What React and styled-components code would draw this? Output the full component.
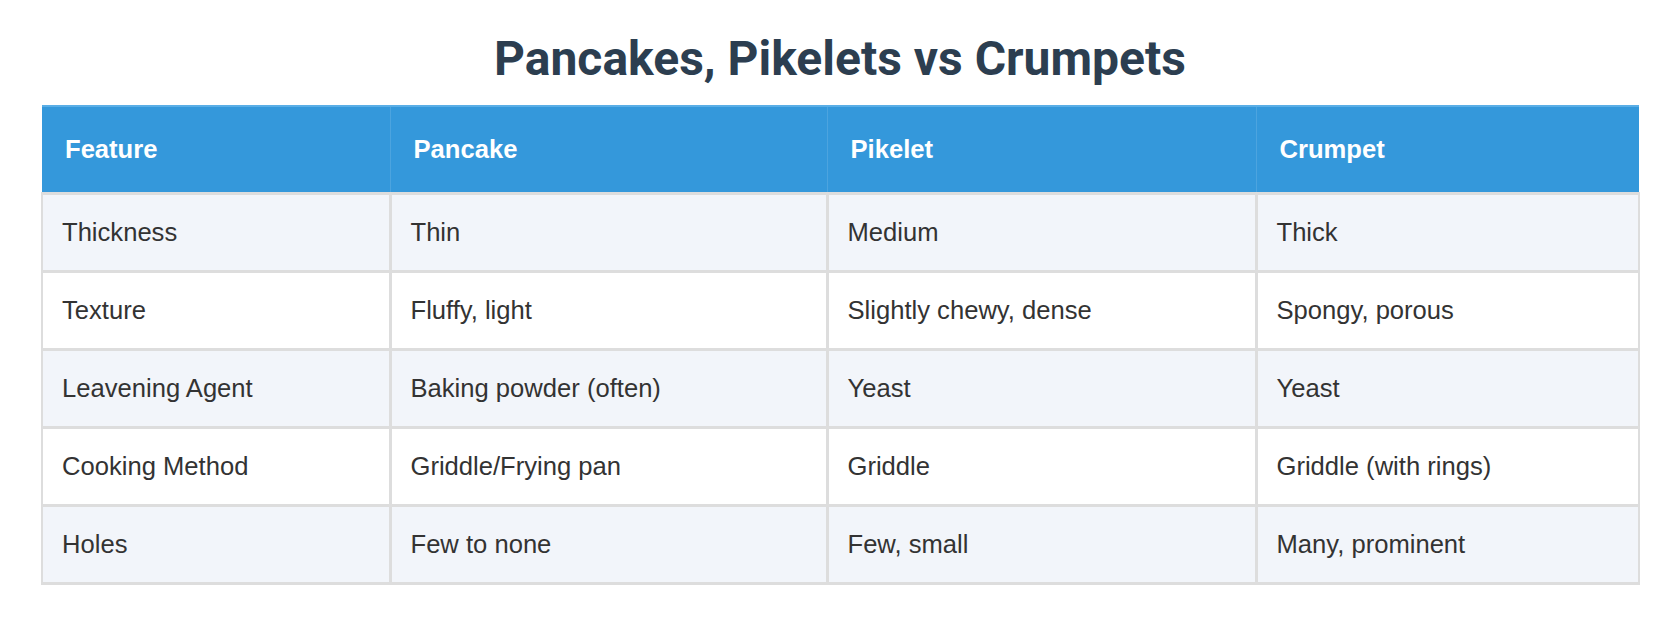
import React from 'react';
import styled, { createGlobalStyle } from 'styled-components';

const GlobalStyle = createGlobalStyle`
    body {
        margin: 0;
        background: #ffffff;
        font-family: 'Liberation Sans', Arial, sans-serif;
    }
`;

const Page = styled.div`
    padding: 0 41px 40px 41px;
`;

const Title = styled.h1`
    margin: 31px 0 18px 0;
    text-align: center;
    font-family: Roboto, 'Liberation Sans', sans-serif;
    font-weight: 700;
    font-size: 48px;
    line-height: 56px;
    color: #2c3e50;
`;

const Table = styled.table`
    width: 100%;
    border-collapse: collapse;
    table-layout: fixed;
`;

const HeadRow = styled.tr`
    background: #3498db;
`;

const HeadCell = styled.th`
    height: 85px;
    padding: 0 0 0 23px;
    text-align: left;
    color: #ffffff;
    font-weight: 700;
    font-size: 25.6px;
    border: none;
    border-top: 2px solid #5aaee6;
    border-left: 1px solid rgba(255, 255, 255, 0.12);
    &:first-child {
        border-left: none;
    }
`;

const Row = styled.tr`
    background: ${(p) => (p.$striped ? '#f2f5fa' : '#ffffff')};
`;

const Cell = styled.td`
    height: 75px;
    padding: 0 0 0 19px;
    font-size: 25.6px;
    color: #333333;
    border: 3px solid #dddddd;
    &:first-child {
        border-left-width: 2px;
    }
    &:last-child {
        border-right-width: 2px;
    }
`;

const columns = [
    { name: 'Feature', width: 348 },
    { name: 'Pancake', width: 437 },
    { name: 'Pikelet', width: 429 },
    { name: 'Crumpet', width: 383 },
];

const rows = [
    ['Thickness', 'Thin', 'Medium', 'Thick'],
    ['Texture', 'Fluffy, light', 'Slightly chewy, dense', 'Spongy, porous'],
    ['Leavening Agent', 'Baking powder (often)', 'Yeast', 'Yeast'],
    ['Cooking Method', 'Griddle/Frying pan', 'Griddle', 'Griddle (with rings)'],
    ['Holes', 'Few to none', 'Few, small', 'Many, prominent'],
];

function App() {
    return (
        <Page>
            <GlobalStyle />
            <Title>Pancakes, Pikelets vs Crumpets</Title>
            <Table>
                <colgroup>
                    {columns.map((col) => (
                        <col key={col.name} style={{ width: col.width }} />
                    ))}
                </colgroup>
                <thead>
                    <HeadRow>
                        {columns.map((col) => (
                            <HeadCell key={col.name}>{col.name}</HeadCell>
                        ))}
                    </HeadRow>
                </thead>
                <tbody>
                    {rows.map((row, i) => (
                        <Row key={row[0]} $striped={i % 2 === 0}>
                            {row.map((value, j) => (
                                <Cell key={j}>{value}</Cell>
                            ))}
                        </Row>
                    ))}
                </tbody>
            </Table>
        </Page>
    );
}

export default App;
